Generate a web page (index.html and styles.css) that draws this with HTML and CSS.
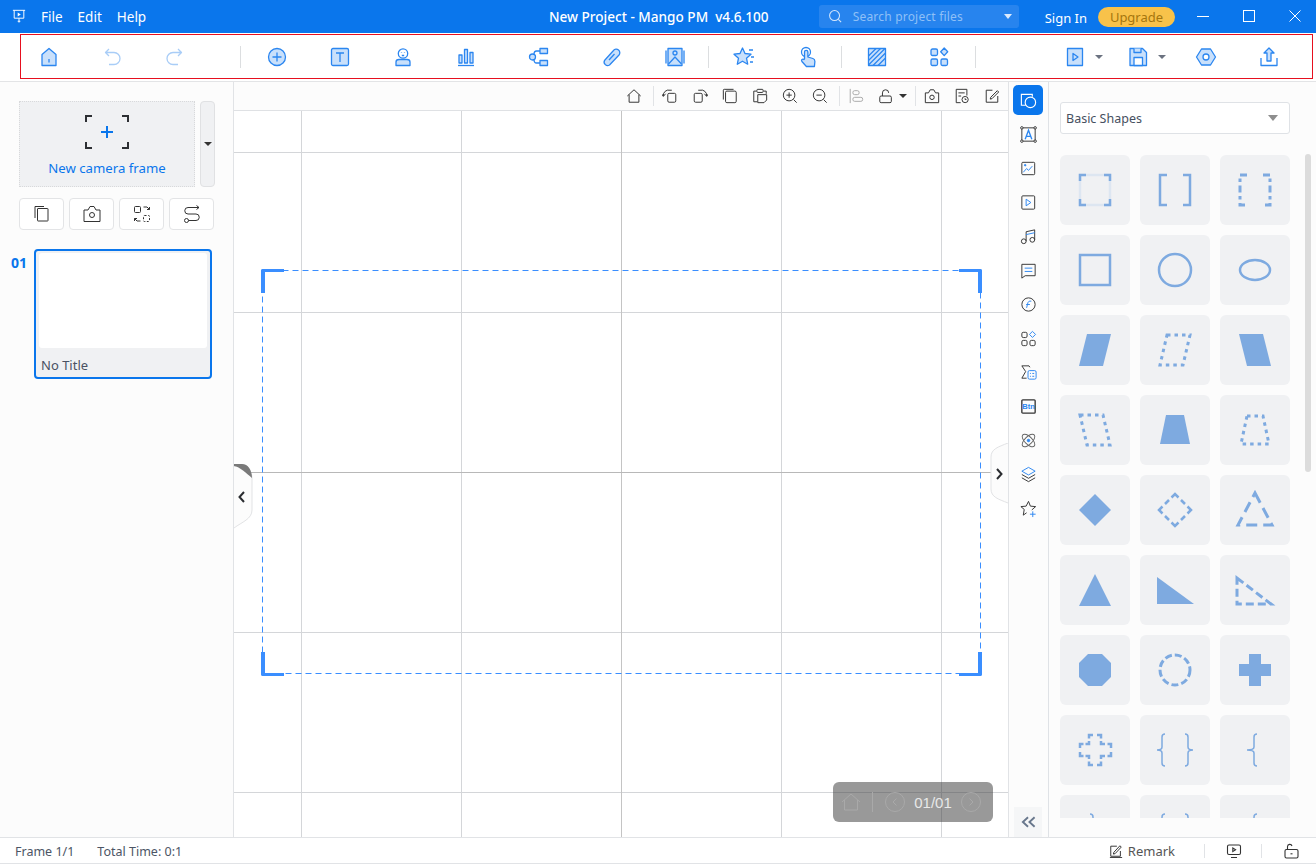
FILE: index.html
```html
<!DOCTYPE html>
<html lang="en">
<head>
<meta charset="utf-8">
<title>New Project - Mango PM</title>
<link rel="stylesheet" href="styles.css">
</head>
<body>
<div class="app">
  <header class="titlebar">
    <svg class="logo" viewBox="0 0 16 16"><path d="M1 1.500h14M2.500 1.500v9h11v-9M8 10.500v5M6.500 14h3" /><path class="solid" d="M6.500 4l3.500 2.300-3.500 2.300z"/></svg>
    <nav class="menu"><span>File</span><span>Edit</span><span>Help</span></nav>
    <div class="app-title">New Project - Mango PM&nbsp; v4.6.100</div>
    <div class="search">
      <svg viewBox="0 0 16 16"><circle cx="7" cy="7" r="5.300"/><path d="M11 11l3 3"/></svg>
      <span>Search project files</span>
      <i class="search-caret"></i>
    </div>
    <span class="signin">Sign In</span>
    <span class="upgrade">Upgrade</span>
    <div class="winctl">
      <svg viewBox="0 0 12 12"><path d="M0 6.500h12"/></svg>
      <svg viewBox="0 0 12 12"><rect x=".5" y=".5" width="11" height="11"/></svg>
      <svg viewBox="0 0 12 12"><path d="M.5.500l11 11M11.500.500l-11 11"/></svg>
    </div>
  </header>

  <div class="toolbar">
    <div class="toolbar-inner">
      <div class="tb-group first">
        <svg class="ti" viewBox="0 0 24 24"><path d="M5 20.500V9.500l7-6 7 6v11z"/><path d="M12 14v3.500"/></svg>
        <svg class="ti faint" viewBox="0 0 24 24"><path d="M9 4L5.500 7.500 9 11M5.500 7.500H14a6 6 0 0 1 0 12H9"/></svg>
        <svg class="ti faint" viewBox="0 0 24 24"><path d="M15 4l3.500 3.500L15 11M18.500 7.500H10a6 6 0 0 0 0 12h5"/></svg>
      </div>
      <i class="tb-sep s1"></i>
      <div class="tb-group">
        <svg class="ti" viewBox="0 0 24 24"><circle cx="12" cy="12" r="8.500"/><path d="M7.500 12h9M12 7.500v9"/></svg>
        <svg class="ti" viewBox="0 0 24 24"><rect x="3.500" y="3.500" width="17" height="17" rx="1.500"/><path d="M8 8h8M12 8v9"/></svg>
        <svg class="ti" viewBox="0 0 24 24"><path d="M5 20.500v-3.500c0-1.500 1.500-2.500 3-2.500h8c1.500 0 3 1 3 2.500v3.500z"/><circle class="white" cx="12" cy="8.500" r="4.700"/><path d="M10.500 7.500v.6M13.500 7.500v.6M10.800 10.500h2.400"/></svg>
        <svg class="ti" viewBox="0 0 24 24"><rect x="5" y="10" width="3" height="8"/><rect x="10.500" y="4.500" width="3" height="13.500"/><rect x="16" y="7.500" width="3" height="10.500"/><path d="M4 20.500h16"/></svg>
        <svg class="ti wide" viewBox="0 0 24 24"><circle cx="5.500" cy="12" r="3"/><rect x="13" y="3.500" width="7.500" height="5"/><rect x="13" y="15.500" width="7.500" height="5"/><path class="none" d="M13 6H9.500Q7 6 7 9.500M13 18H9.500Q7 18 7 14.500"/></svg>
        <svg class="ti wide" viewBox="0 0 24 24"><path d="M4.500 15.500l9-10a3.500 3.500 0 0 1 5.500 4.500l-9.500 10a3.500 3.500 0 0 1-5-4.500z"/><path d="M9 15l5.500-6"/></svg>
        <svg class="ti" viewBox="0 0 24 24"><rect x="5" y="3.500" width="14" height="17"/><path d="M3 5.500v13M21 5.500v13M5.500 19l6.500-7 6.500 7"/><circle cx="12" cy="8" r="2"/></svg>
      </div>
      <i class="tb-sep s2"></i>
      <div class="tb-group g3">
        <svg class="ti" viewBox="0 0 24 24"><path d="M10.500 3l2.500 5.500 6 .700-4.500 4 1.200 6-5.200-3-5.200 3 1.200-6-4.500-4 6-.700z"/><path d="M17 5h4M19 12h3M18 17h3"/></svg>
        <svg class="ti" viewBox="0 0 24 24"><circle cx="10" cy="7" r="4.500" class="none"/><path d="M8.500 14V7a1.700 1.700 0 0 1 3.400 0v5l5 1.500c1.500.5 2 1.500 2 3l-.5 5h-8l-4.500-5c-1-1.500.5-3 2-2z"/></svg>
      </div>
      <i class="tb-sep s3"></i>
      <div class="tb-group g4">
        <svg class="ti" viewBox="0 0 24 24"><rect x="3.500" y="3.500" width="17" height="17"/><path d="M3.500 11l7.500-7.500M3.500 15.500l12-12M3.500 20l16.500-16.500M8 20.500l12.500-12.500M13 20.500l7.500-7.500"/></svg>
        <svg class="ti" viewBox="0 0 24 24"><rect x="4" y="4" width="6.500" height="6.500" rx="1.500"/><rect x="4" y="14" width="6.500" height="6.500" rx="1.500"/><rect x="14" y="14" width="6.500" height="6.500" rx="1.500"/><path d="M17.200 3l3.500 3.800-3.500 3.800-3.500-3.800z"/></svg>
      </div>
      <i class="tb-sep s4"></i>
      <div class="tb-right">
        <svg class="ti" viewBox="0 0 24 24"><rect x="4.500" y="3.500" width="15" height="17"/><path d="M10 8.500l5 3.500-5 3.500z"/></svg>
        <i class="caret"></i>
        <svg class="ti r2" viewBox="0 0 24 24"><path d="M4 3.500h12.500l4 4v13H4z"/><path class="white" d="M8 20.500v-8h8.500v8z"/><path d="M8 3.500v4h7v-4"/></svg>
        <i class="caret"></i>
        <svg class="ti r3" viewBox="0 0 24 24"><path d="M7.500 4h9l5 8-5 8h-9l-5-8z"/><circle class="white" cx="12" cy="12" r="3"/></svg>
        <svg class="ti r4" viewBox="0 0 24 24"><path d="M12 3l5 5h-3v8h-4V8H7z"/><path class="none" d="M4 13v7.500h16V13"/></svg>
      </div>
    </div>
  </div>

  <main class="main">
    <aside class="left">
      <div class="new-row">
        <div class="new-frame">
          <svg viewBox="0 0 44 34"><path class="corners" d="M1 7V1h6M37 1h6v6M43 27v6h-6M7 33H1v-6"/><path class="plus" d="M16 17h12M22 11v12"/></svg>
          <span>New camera frame</span>
        </div>
        <div class="new-drop"><i class="caret dark"></i></div>
      </div>
      <div class="tool-row">
        <button class="tool"><svg class="li" viewBox="0 0 18 18"><rect x="4.500" y="3.500" width="10.500" height="12.500" rx=".5"/><path d="M2 13V1.500h9"/></svg></button>
        <button class="tool"><svg class="li" viewBox="0 0 18 18"><path d="M1 5h4l2-3.500h4L13 5h4v11.500H1z"/><circle cx="9" cy="10" r="2.500"/></svg></button>
        <button class="tool"><svg class="li" viewBox="0 0 18 18"><rect x="1.500" y="1.500" width="6" height="6" rx="1"/><rect x="10.500" y="10.500" width="6" height="6" rx="1" stroke-dasharray="2 1.500"/><path d="M10.500 2h3.500l2.500 2.500M16.500 2v2.500H14M7.500 16H4L1.500 13.500M1.500 16v-2.500H4"/></svg></button>
        <button class="tool"><svg class="li" viewBox="0 0 18 18"><circle cx="3.500" cy="15.500" r="2"/><path d="M5.500 15.500H13a3 3 0 0 0 0-6.500H5a3.200 3.200 0 0 1 0-6.500h11M13.500.500l2.500 2-2.500 2"/></svg></button>
      </div>
      <div class="slide-row">
        <span class="slide-no">01</span>
        <div class="slide">
          <div class="slide-thumb"></div>
          <div class="slide-title">No Title</div>
        </div>
      </div>
    </aside>

    <section class="center">
      <div class="canvas-tools">
        <svg class="ci" viewBox="0 0 18 18"><path d="M1.500 9L9 2l7.500 7M3.500 7.500v8.500h11V7.500"/></svg>
        <i class="ct-sep"></i>
        <svg class="ci" viewBox="0 0 18 18"><rect x="6.500" y="6" width="9" height="10" rx="1.500"/><path d="M1.500 9A6 6 0 0 1 9 2.500h2M4 6.500L1.500 9.500-.5 6.500"/></svg>
        <svg class="ci" viewBox="0 0 18 18"><rect x="2.500" y="6" width="9" height="10" rx="1.500"/><path d="M16.500 9A6 6 0 0 0 9 2.500H7M14 6.500l2.500 3 2-3"/></svg>
        <svg class="ci" viewBox="0 0 18 18"><rect x="4" y="3.500" width="12" height="13" rx="1.500"/><path d="M1.500 13V2.500q0-1 1-1H13"/></svg>
        <svg class="ci" viewBox="0 0 18 18"><path d="M5 3.500H2v12h4M13 3.500h3v3"/><rect x="5.500" y="1.500" width="7" height="3.500" rx="1"/><path d="M6.500 7.500h10v6l-3 3h-7z"/></svg>
        <svg class="ci" viewBox="0 0 18 18"><circle cx="8" cy="8" r="6.500"/><path d="M13 13l3.500 3.500M5 8h6M8 5v6"/></svg>
        <svg class="ci" viewBox="0 0 18 18"><circle cx="8" cy="8" r="6.500"/><path d="M13 13l3.500 3.500M5 8h6"/></svg>
        <i class="ct-sep"></i>
        <svg class="ci muted" viewBox="0 0 18 18"><path d="M2.500 1v16"/><rect x="5.500" y="3" width="7" height="4.500" rx="2"/><rect x="5.500" y="10.500" width="11" height="4.500" rx="2"/></svg>
        <svg class="ci" viewBox="0 0 18 18"><rect x="2" y="9" width="13" height="7.500" rx="1.500"/><path d="M5 9V5.500a3.500 3.500 0 0 1 7 0"/></svg>
        <i class="caret dark ct-caret"></i>
        <i class="ct-sep"></i>
        <svg class="ci" viewBox="0 0 18 18"><path d="M1.500 5.500h3.500l2-3.500h4l2 3.500h3.500v11h-15z"/><circle cx="9" cy="10.500" r="2.500"/></svg>
        <svg class="ci" viewBox="0 0 18 18"><path d="M7.500 16.500H2.500v-15h12v7M5 5.500h7M5 9h3"/><circle cx="12.500" cy="13" r="3.500"/><path d="M12.500 11.500V13h1.500"/></svg>
        <svg class="ci" viewBox="0 0 18 18"><path d="M9.500 2.500H2.500v13.500h13V9M7.500 10.500L15 3l1.500 1.500-7.500 7.500-2 .500z"/></svg>
      </div>
      <div class="stage">
        <div class="frame">
          <svg class="frame-line" viewBox="0 0 720 404"><rect x=".5" y=".5" width="718" height="403"/></svg>
          <i class="fc tl"></i><i class="fc tr"></i><i class="fc bl"></i><i class="fc br"></i>
        </div>
        <svg class="handle-l" viewBox="0 0 20 66"><path class="tab" d="M0 2C10 3 18 6 18 14V46C18 55 8 58 0 64"/><path class="blob" d="M0 0H8C14 0 18 6 18 14 12 9 6 3 0 2z"/><path class="chev" d="M10 28l-4.500 5 4.500 5"/></svg>
        <svg class="handle-r" viewBox="0 0 18 62"><path class="tab" d="M18 0C8 4 1 6 1 14V46C1 54 8 56 18 60"/><path class="chev" d="M7 26l4.500 5-4.500 5"/></svg>
        <div class="pager">
          <svg class="pg-home" viewBox="0 0 20 20"><path d="M1 10l9-8 9 8M3.500 8v10h13V8"/></svg>
          <i class="pg-sep"></i>
          <svg class="pg-btn" viewBox="0 0 20 20"><circle cx="10" cy="10" r="9.500"/><path d="M11.500 6.500l-3.500 3.500 3.500 3.500"/></svg>
          <span class="pg-text">01/01</span>
          <svg class="pg-btn" viewBox="0 0 20 20"><circle cx="10" cy="10" r="9.500"/><path d="M8.500 6.500l3.500 3.500-3.500 3.500"/></svg>
        </div>
      </div>
    </section>

    <nav class="rail">
      <div class="rail-item active"><svg viewBox="0 0 20 20"><path class="wh" d="M7 15H2.500V3.500h11.500V6"/><circle class="wh" cx="12" cy="12" r="5.500"/></svg></div>
      <div class="rail-item"><svg viewBox="0 0 20 20"><rect class="dk" x="3" y="3" width="14" height="14"/><circle class="dk wf" cx="3" cy="3" r="1.300"/><circle class="dk wf" cx="17" cy="3" r="1.300"/><circle class="dk wf" cx="3" cy="17" r="1.300"/><circle class="dk wf" cx="17" cy="17" r="1.300"/><path class="bl thick" d="M6.500 15L10 5.500l3.500 9.500M7.500 12h5"/></svg></div>
      <div class="rail-item"><svg viewBox="0 0 20 20"><rect class="dk" x="3" y="3.500" width="13.500" height="13" rx="1"/><path class="bl" d="M4.500 14l3.500-4 2 2 4-4.500"/><circle class="bl bf" cx="6.500" cy="6.500" r=".8"/></svg></div>
      <div class="rail-item"><svg viewBox="0 0 20 20"><rect class="dk" x="3" y="3" width="13.500" height="14" rx="1"/><path class="bl" d="M7.500 6.500l5 3.500-5 3.500z"/></svg></div>
      <div class="rail-item"><svg viewBox="0 0 20 20"><circle class="dk" cx="5" cy="15" r="2.500"/><circle class="dk" cx="14" cy="13.500" r="2.500"/><path class="dk" d="M7.500 15V5l9-2v10.500"/><path class="bl" d="M7.500 8l9-2"/></svg></div>
      <div class="rail-item"><svg viewBox="0 0 20 20"><path class="dk" d="M3 3.500h14v12H6.500L3 18z"/><path class="bl" d="M6 7.500h8M6 11h8"/></svg></div>
      <div class="rail-item"><svg viewBox="0 0 20 20"><circle class="dk" cx="10" cy="10" r="7"/><path class="bl" d="M13 6.500c-2.500-.500-3.500.500-4 3l-1 4M7.500 10h4"/></svg></div>
      <div class="rail-item"><svg viewBox="0 0 20 20"><rect class="dk" x="3" y="3.500" width="5.500" height="5.500" rx="1.500"/><rect class="dk" x="3" y="12" width="5.500" height="5.500" rx="1.500"/><rect class="dk" x="11.500" y="12" width="5.500" height="5.500" rx="1.500"/><path class="bl" d="M14.200 2.500l3.200 3.200-3.200 3.200-3.200-3.200z"/></svg></div>
      <div class="rail-item"><svg viewBox="0 0 20 20"><path class="dk" d="M11.500 4.500l-1-1.500H3l4 6-4 7h5"/><rect class="bl" x="9.500" y="8" width="8.500" height="9" rx="1.500"/><path class="bl" d="M11.500 11h1M14 11h2M11.500 14h1M14 14h2"/></svg></div>
      <div class="rail-item"><svg viewBox="0 0 20 20"><rect class="dk thick" x="3" y="3" width="14" height="14" rx="1"/><text class="btn-text" x="10" y="13">Btn</text></svg></div>
      <div class="rail-item"><svg viewBox="0 0 20 20"><ellipse class="gr" cx="10" cy="10" rx="8.500" ry="4" transform="rotate(45 10 10)"/><ellipse class="gr" cx="10" cy="10" rx="8.500" ry="4" transform="rotate(-45 10 10)"/><circle class="bl bf" cx="10" cy="10" r="1.300"/></svg></div>
      <div class="rail-item"><svg viewBox="0 0 20 20"><path class="bl" d="M10 2.500l7 4-7 4-7-4z"/><path class="dk" d="M3 10l7 4 7-4M3 13.500l7 4 7-4"/></svg></div>
      <div class="rail-item"><svg viewBox="0 0 20 20"><path class="dk" d="M10 2.500l2 5 5.500.5-4 3.500M8 14.500l-3.500 2.500 1-6L2 8l5.500-.5L10 2.500"/><path class="bl" d="M11.500 16h6M14.500 13v6"/></svg></div>
      <div class="rail-collapse"><svg viewBox="0 0 16 12"><path d="M7.500 1L2 6l5.500 5M14.500 1L9 6l5.500 5"/></svg></div>
    </nav>

    <aside class="panel">
      <div class="select"><span>Basic Shapes</span><i class="select-caret"></i></div>
      <div class="shapes">
        <div class="tile"><svg viewBox="0 0 70 70"><rect class="sl pale" x="20" y="20" width="30" height="30"/><path class="sl" d="M26 20h-6v6M44 20h6v6M50 44v6h-6M26 50h-6v-6"/></svg></div>
        <div class="tile"><svg viewBox="0 0 70 70"><path class="sl" d="M27 20h-7v30h7M43 20h7v30h-7"/></svg></div>
        <div class="tile"><svg viewBox="0 0 70 70"><path class="sl bk" d="M27 20h-7v30h7M43 20h7v30h-7"/></svg></div>
        <div class="tile"><svg viewBox="0 0 70 70"><rect class="sl" x="20" y="20" width="30" height="30"/></svg></div>
        <div class="tile"><svg viewBox="0 0 70 70"><circle class="sl" cx="35" cy="35" r="16"/></svg></div>
        <div class="tile"><svg viewBox="0 0 70 70"><ellipse class="sl" cx="35" cy="35" rx="15" ry="10"/></svg></div>
        <div class="tile"><svg viewBox="0 0 70 70"><path class="sf" d="M27 19h24l-8 32H19z"/></svg></div>
        <div class="tile"><svg viewBox="0 0 70 70"><path class="sl dot" d="M27 20h23l-7 30H20z"/></svg></div>
        <div class="tile"><svg viewBox="0 0 70 70"><path class="sf" d="M19 19h24l8 32H27z"/></svg></div>
        <div class="tile"><svg viewBox="0 0 70 70"><path class="sl dot" d="M20 20h23l7 30H27z"/></svg></div>
        <div class="tile"><svg viewBox="0 0 70 70"><path class="sf" d="M26 20h18l6 29H20z"/></svg></div>
        <div class="tile"><svg viewBox="0 0 70 70"><path class="sl dot" d="M27 21h16l6 28H21z"/></svg></div>
        <div class="tile"><svg viewBox="0 0 70 70"><path class="sf" d="M35 19l16 16-16 16-16-16z"/></svg></div>
        <div class="tile"><svg viewBox="0 0 70 70"><path class="sl dash" d="M31.500 22.500L35 19l3.500 3.500M41 25l4 4M47.500 31.500L51 35l-3.500 3.500M45 41l-4 4M38.500 47.500L35 51l-3.500-3.500M29 45l-4-4M22.500 38.500L19 35l3.500-3.500M25 29l4-4"/></svg></div>
        <div class="tile"><svg viewBox="0 0 70 70"><path class="sl long" d="M35 18l17 32H18z"/></svg></div>
        <div class="tile"><svg viewBox="0 0 70 70"><path class="sf" d="M35 19l16 32H19z"/></svg></div>
        <div class="tile"><svg viewBox="0 0 70 70"><path class="sf" d="M17 22l37 27H17z"/></svg></div>
        <div class="tile"><svg viewBox="0 0 70 70"><path class="sl mid" d="M17 23l34 26H17z"/></svg></div>
        <div class="tile"><svg viewBox="0 0 70 70"><path class="sf" d="M28 19h14l9 9v14l-9 9H28l-9-9V28z"/></svg></div>
        <div class="tile"><svg viewBox="0 0 70 70"><circle class="sl circ" cx="35" cy="35" r="15"/></svg></div>
        <div class="tile"><svg viewBox="0 0 70 70"><path class="sf" d="M29 19h12v10h10v12H41v10H29V41H19V29h10z"/></svg></div>
        <div class="tile"><svg viewBox="0 0 70 70"><path class="sl dash" d="M29 23.500V20H33M37 20H41V23.500M41 26V29H45M47.500 29H51V33M51 37V41H47.500M45 41H41V44M41 46.500V50H37M33 50H29V46.500M29 44V41H25.500M23.500 41H20V37M20 33V29H23.500M25.500 29H29V26"/></svg></div>
        <div class="tile"><svg viewBox="0 0 70 70"><path class="sl th" d="M25 19q-3 0-3 3v10q0 3-5 3 5 0 5 3v10q0 3 3 3M45 19q3 0 3 3v10q0 3 5 3-5 0-5 3v10q0 3-3 3"/></svg></div>
        <div class="tile"><svg viewBox="0 0 70 70"><path class="sl th" d="M37 19q-3 0-3 3v10q0 3-7 3 7 0 7 3v10q0 3 3 3"/></svg></div>
        <div class="tile"><svg viewBox="0 0 70 70"><path class="sl th" d="M30 19q3 0 3 3v10q0 3 6 3-6 0-6 3v10q0 3-3 3"/></svg></div>
        <div class="tile"><svg viewBox="0 0 70 70"><path class="sl th" d="M25 19q-3 0-3 3v10q0 3-5 3 5 0 5 3v10q0 3 3 3M45 19q3 0 3 3v10q0 3 5 3-5 0-5 3v10q0 3-3 3"/></svg></div>
        <div class="tile"><svg viewBox="0 0 70 70"><path class="sl th" d="M37 19q-3 0-3 3v10q0 3-7 3 7 0 7 3v10q0 3 3 3"/></svg></div>
      </div>
      <i class="scrollbar"></i>
    </aside>
  </main>

  <footer class="status">
    <span class="st-a">Frame 1/1</span>
    <span class="st-b">Total Time: 0:1</span>
    <div class="st-right">
      <svg class="si" viewBox="0 0 16 16"><path d="M9 2.500H2v11.500h11V8M1 15.500h14M5.500 9.500l7-7.500 1.500 1.500-7 7.500-2 .500z"/></svg>
      <span class="remark">Remark</span>
      <i class="st-sep s-a"></i>
      <svg class="si big" viewBox="0 0 16 16"><rect x="1.500" y="2" width="13" height="9.500" rx="1.500"/><path d="M6.800 5l2.800 1.800-2.800 1.800zM5 14.500h6"/></svg>
      <i class="st-sep s-b"></i>
      <svg class="si big" viewBox="0 0 16 16"><rect x="2" y="6.500" width="13" height="8.500" rx="1.500"/><path d="M4.500 6.500V3.500a2.300 2.300 0 0 1 4.500-.500"/><path d="M7.500 10.800h2"/></svg>
    </div>
  </footer>
</div>
</body>
</html>
```

FILE: styles.css
```css
* { box-sizing: border-box; }
html, body { margin: 0; padding: 0; }
body { font-family: "Noto Sans", "Noto Sans CJK SC", sans-serif; color: #3d4757; background: #fcfcfc; }
svg { display: block; flex: none; }
i { display: block; flex: none; font-style: normal; }

.app { width: 1316px; height: 864px; display: flex; flex-direction: column; overflow: hidden; }

/* title bar */
.titlebar { height: 33px; flex: none; background: #0a76ec; color: #fff; display: flex; align-items: center; font-size: 13.500px; padding-left: 12px; }
.logo { width: 14px; height: 16px; margin-top: -2px; fill: none; stroke: #fff; stroke-width: 1.100; }
.logo .solid { fill: #fff; stroke: none; }
.menu { display: flex; gap: 15px; margin-left: 15px; }
.app-title { margin-left: auto; white-space: nowrap; font-weight: 500; font-size: 13.600px; }
.search { width: 200px; height: 23px; margin-left: 50px; margin-top: -1px; border-radius: 3px; background: #2784ee; color: #8fc0f7; display: flex; align-items: center; padding: 0 7px 0 9px; font-size: 12px; letter-spacing: .2px; }
.search svg { width: 15px; height: 15px; fill: none; stroke: #d5e7fc; stroke-width: 1.100; margin-right: 10px; }
.search-caret { margin-left: auto; width: 0; height: 0; border: 4px solid transparent; border-top: 5px solid #dbeafd; border-bottom: 0; }
.signin { margin-left: 26px; margin-top: 2px; font-size: 13px; }
.upgrade { width: 77px; height: 20px; margin-left: 11px; border-radius: 10px; background: #f8c24a; color: #a5760e; display: flex; align-items: center; justify-content: center; font-size: 13px; }
.winctl { margin-left: 22px; display: flex; gap: 34px; padding-right: 15px; margin-top: -1px; }
.winctl svg { width: 12px; height: 12px; fill: none; stroke: #fff; stroke-width: 1; }

/* main toolbar */
.toolbar { height: 49px; flex: none; background: #fff; border-bottom: 1px solid #e3e4e6; padding: 1px 3px 1px 20px; }
.toolbar-inner { height: 45px; border: 1px solid #e60f1f; display: flex; align-items: center; padding: 0 31px 0 15.500px; }
.tb-group { display: flex; gap: 39px; }
.tb-group.g3 { gap: 40px; }
.tb-group.g4 { gap: 38px; }
.tb-group .wide { margin-left: 10px; }
.tb-sep { width: 1px; height: 22px; background: #dcdee0; }
.tb-sep.s1 { margin: 0 23.500px 0 53.500px; }
.tb-sep.s2 { margin: 0 22.500px 0 21.500px; }
.tb-sep.s3 { margin: 0 23px 0 21.500px; }
.tb-sep.s4 { margin-left: 24px; }
.tb-right { margin-left: auto; display: flex; align-items: center; }
.ti { width: 24px; height: 24px; fill: #c9e0fb; stroke: #2b86f0; stroke-width: 1.300; stroke-linejoin: round; }
.ti.faint { fill: none; stroke: #a9cdf7; }
.ti .white { fill: #fff; }
.ti .none { fill: none; }
.caret { width: 8px; height: 4px; margin-left: 8px; border-left: 4px solid transparent; border-right: 4px solid transparent; border-top: 4px solid #6b7280; }
.caret.dark { border-top-color: #333; }
.r2 { margin-left: 23px; }
.r3 { margin-left: 28px; }
.r4 { margin-left: 39px; }

/* layout row */
.main { flex: 1; min-height: 0; display: flex; }

/* left column */
.left { width: 234px; flex: none; background: #fcfcfc; border-right: 1px solid #e1e3e6; padding: 19px 0 0 19px; }
.new-row { display: flex; gap: 5px; height: 86px; }
.new-frame { width: 176px; background: #f0f1f3; border: 1px dotted #d8d9db; display: flex; flex-direction: column; align-items: center; color: #0a76ec; font-size: 13.200px; padding-top: 13px; white-space: nowrap; }
.new-frame svg { width: 44px; height: 34px; margin-bottom: 10px; fill: none; }
.corners { stroke: #2d2f33; stroke-width: 2; }
.plus { stroke: #0a76ec; stroke-width: 2; }
.new-drop { width: 15px; background: #f0f1f3; border: 1px solid #e0e1e3; border-radius: 4px; display: flex; align-items: center; justify-content: center; }
.new-drop .caret { margin-left: 0; }
.tool-row { display: flex; gap: 5px; margin-top: 11px; }
.tool { width: 45px; height: 32px; padding: 0; background: #fff; border: 1px solid #e3e4e6; border-radius: 4px; display: flex; align-items: center; justify-content: center; }
.li { width: 18px; height: 18px; fill: none; stroke: #333; stroke-width: 1; }
.slide-row { display: flex; margin: 19px 0 0 -8px; }
.slide-no { width: 23px; color: #0a76ec; font-weight: 700; font-size: 14px; line-height: 1; margin-top: 7px; }
.slide { width: 178px; height: 130px; background: #f0f1f3; border: 2px solid #0a76ec; border-radius: 4px; padding: 2px 3px 0; }
.slide-thumb { height: 95px; background: #fff; border-radius: 3px; }
.slide-title { font-size: 13px; color: #4a5263; margin: 8px 0 0 2px; line-height: 18px; }

/* canvas */
.center { width: 774px; flex: none; display: flex; flex-direction: column; }
.canvas-tools { height: 29px; flex: none; background: #fcfcfc; border-bottom: 1px solid #dfe1e4; display: flex; justify-content: flex-end; align-items: center; padding-right: 8px; padding-bottom: 1px; }
.ci { width: 16px; height: 16px; margin-left: 14px; fill: none; stroke: #333; stroke-width: 1.100; stroke-linejoin: round; }
.ci.muted { stroke: #aaa; }
.ct-sep { width: 1px; height: 20px; background: #e1e3e6; margin-left: 11px; }
.ct-sep + .ci { margin-left: 8px; }
.ct-caret { margin-left: 5px; }
.ct-caret + .ct-sep { margin-left: 8px; }
.stage { flex: 1; position: relative; overflow: hidden; background-color: #fff;
  background-image: linear-gradient(#b8b8b8, #b8b8b8), linear-gradient(#c4c4c4, #c4c4c4), linear-gradient(90deg, #d4d6d9 1px, transparent 1px), linear-gradient(#d4d6d9 1px, transparent 1px);
  background-size: 100% 1px, 1px 100%, 160px 100%, 100% 160px;
  background-position: 0 361px, 387px 0, 67px 0, 0 41px;
  background-repeat: no-repeat, no-repeat, repeat, repeat; }
.frame { position: absolute; left: 28px; top: 159px; width: 720px; height: 404px; }
.frame-line { position: absolute; left: 0; top: 0; width: 720px; height: 404px; fill: none; stroke: #3a8eff; stroke-width: 1; stroke-dasharray: 6 4; }
.fc { position: absolute; width: 23px; height: 24px; border: 0 solid #3a8eff; }
.fc.tl { left: -1px; top: -1px; border-top-width: 3px; border-left-width: 4px; border-top-left-radius: 2px; }
.fc.tr { right: 0; top: -1px; border-top-width: 3px; border-right-width: 4px; border-top-right-radius: 2px; }
.fc.bl { left: -1px; bottom: -2px; border-bottom-width: 3px; border-left-width: 4px; border-bottom-left-radius: 2px; }
.fc.br { right: 0; bottom: -2px; border-bottom-width: 3px; border-right-width: 4px; border-bottom-right-radius: 2px; }
.handle-l { position: absolute; left: 0; top: 353px; width: 20px; height: 66px; }
.handle-r { position: absolute; right: 0; top: 332px; width: 18px; height: 62px; }
.tab { fill: #fcfcfc; stroke: #e2e3e5; stroke-width: 1; }
.blob { fill: #7a7a7a; }
.chev { fill: none; stroke: #2a2c30; stroke-width: 2; }
.pager { position: absolute; left: 599px; top: 671px; width: 160px; height: 40px; border-radius: 6px; background: rgba(60, 60, 60, .52); display: flex; align-items: center; padding-left: 8px; color: #e8e8e8; }
.pager svg { fill: none; stroke: #a9a9a9; stroke-width: 1; }
.pg-home { width: 20px; height: 20px; }
.pg-sep { width: 1px; height: 20px; background: #a9a9a9; margin: 0 12px 0 11px; }
.pg-btn { width: 20px; height: 20px; }
.pg-text { width: 56px; text-align: center; font-family: "Liberation Sans", sans-serif; font-size: 15px; white-space: nowrap; }

/* icon rail */
.rail { width: 41px; flex: none; background: #fcfcfc; border-left: 1px solid #e1e3e6; border-right: 1px solid #dfe2e6; display: flex; flex-direction: column; align-items: center; padding: 3px 1px 0 0; gap: 4px; }
.rail-item { width: 30px; height: 30px; border-radius: 5px; display: flex; align-items: center; justify-content: center; }
.rail-item svg { width: 19px; height: 19px; fill: none; stroke-width: 1; }
.rail-item.active { background: #0a76ec; }
.wh { stroke: #fff; stroke-width: 1.200; }
.dk { stroke: #333; }
.gr { stroke: #666; }
.bl { stroke: #2b86f0; }
.bf { fill: #2b86f0; }
.wf { fill: #fff; }
.thick { stroke-width: 1.400; }
.btn-text { font-family: "Liberation Sans", sans-serif; font-size: 8px; font-weight: 700; fill: #2b86f0; stroke: none; text-anchor: middle; }
.rail-collapse { width: 28px; height: 30px; margin-top: auto; background: #f5f6f7; display: flex; align-items: center; justify-content: center; }
.rail-collapse svg { width: 15px; height: 12px; fill: none; stroke: #68778c; stroke-width: 2; }

/* shapes panel */
.panel { flex: 1; background: #fcfcfc; padding: 20px 0 0 11px; position: relative; }
.select { width: 230px; height: 32px; background: #fff; border: 1px solid #dfe2e6; border-radius: 3px; display: flex; align-items: center; padding: 0 11px 0 5px; font-size: 12.500px; color: #46505f; }
.select-caret { margin-left: auto; width: 0; height: 0; border-left: 5px solid transparent; border-right: 5px solid transparent; border-top: 6px solid #8e8e8e; }
.shapes { margin-top: 21px; width: 230px; height: 663px; overflow: hidden; display: grid; grid-template-columns: repeat(3, 70px); grid-auto-rows: 70px; gap: 10px; }
.tile { background: #f0f1f3; border-radius: 6px; }
.tile svg { width: 70px; height: 70px; }
.sf { fill: #7eaae0; }
.sl { fill: none; stroke: #7eaae0; stroke-width: 2.500; }
.sl.pale { stroke: #dde6f1; }
.sl.bk { stroke-width: 3; stroke-dasharray: 7 3.500 3.500 3.500; }
.sl.dot { stroke-width: 3; stroke-dasharray: 3.500 4; }
.sl.dash { stroke-width: 2.500; }
.sl.long { stroke-width: 3; stroke-dasharray: 11 6; }
.sl.mid { stroke-width: 3; stroke-dasharray: 8 4; }
.sl.circ { stroke-width: 3; stroke-dasharray: 7 3; }
.sl.th { stroke-width: 1.500; }
.scrollbar { position: absolute; left: 256px; top: 72px; width: 6px; height: 318px; border-radius: 3px; background: #dcdcdc; }

/* status bar */
.status { height: 27px; flex: none; background: #fff; border-top: 1px solid #e1e3e6; border-bottom: 1px solid #e1e3e6; display: flex; align-items: center; font-size: 12.500px; color: #4c5565; padding: 1px 0 0 15px; }
.st-b { margin-left: 23px; }
.st-right { margin-left: auto; display: flex; align-items: center; padding-right: 17px; }
.si { width: 14px; height: 14px; fill: none; stroke: #333; stroke-width: 1.100; }
.si.big { width: 16px; height: 16px; }
.remark { font-size: 13px; margin-left: 5px; color: #555; }
.st-sep { width: 1px; height: 14px; background: #e1e3e6; }
.s-a { margin: 0 21px 0 29px; }
.s-b { margin: 0 21px 0 19px; }
```
